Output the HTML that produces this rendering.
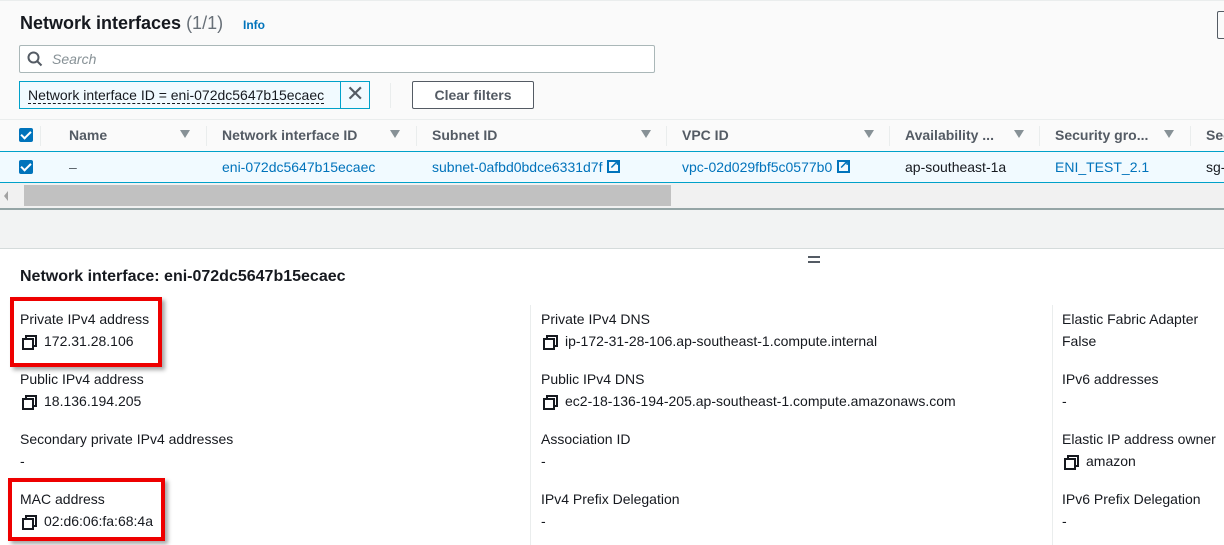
<!DOCTYPE html>
<html><head><meta charset="utf-8"><style>
*{margin:0;padding:0;box-sizing:border-box}
body{width:1224px;height:545px;overflow:hidden;background:#fff;font-family:"Liberation Sans",sans-serif;font-size:14px;color:#16191f;position:relative}
.a{position:absolute;white-space:nowrap}
.lnk{color:#0073bb}
.th{font-weight:bold;color:#545b64;top:127px}
.tri{position:absolute;top:130px;width:0;height:0;border-left:5px solid transparent;border-right:5px solid transparent;border-top:8px solid #879196}
.sep{position:absolute;top:126px;width:1px;height:20px;background:#eaeded}
.cb{position:absolute;width:14px;height:14px;background:#0073bb;border-radius:2px}
.cb:after{content:"";position:absolute;left:4px;top:1px;width:4px;height:8px;border:solid #fff;border-width:0 2px 2px 0;transform:rotate(45deg)}
.lbl{color:#16191f}
.cp{display:inline-block;width:12px;height:12px;position:relative;margin-right:10px;vertical-align:-1px}
.cp:before{content:"";position:absolute;left:3px;top:0;width:8px;height:8px;border:2px solid #16191f}
.cp:after{content:"";position:absolute;left:0;top:3px;width:8px;height:8px;border:2px solid #16191f;background:#fff}
.ext{display:inline-block;width:13px;height:13px;border:2px solid #0073bb;margin-left:5px;vertical-align:-1px;position:relative}
.ext:after{content:"↗";position:absolute;left:0;top:-5px;font-size:12px;font-weight:bold;color:#0073bb}
.red{position:absolute;border:4px solid #ee0000;box-shadow:3px 3px 4px rgba(0,0,0,.35)}
</style></head><body>
<div class="a" style="left:0;top:0;width:1224px;height:208px;background:#fafafa;border-top:1px solid #eaeded"></div>
<div class="a" style="left:20px;top:13px;font-size:18px;font-weight:bold">Network interfaces <span style="font-weight:normal;color:#687078">(1/1)</span></div>
<div class="a lnk" style="left:243px;top:18px;font-size:12px;font-weight:bold">Info</div>
<div class="a" style="left:1217px;top:11px;width:10px;height:28px;border:1px solid #545b64;border-radius:2px"></div>
<div class="a" style="left:19px;top:45px;width:636px;height:28px;border:1px solid #aab7b8;background:#fff;border-radius:2px"></div>
<svg class="a" style="left:27px;top:51px" width="16" height="16"><circle cx="6.5" cy="6.5" r="5" fill="none" stroke="#545b64" stroke-width="2"/><line x1="10" y1="10" x2="14.5" y2="14.5" stroke="#545b64" stroke-width="2"/></svg>
<div class="a" style="left:52px;top:51px;color:#879196;font-style:italic">Search</div>
<div class="a" style="left:19px;top:81px;width:351px;height:28px;border:1px solid #00a1c9;background:#f1faff"></div>
<div class="a" style="left:340px;top:81px;width:1px;height:28px;background:#00a1c9"></div>
<div class="a" style="left:28px;top:87px;border-bottom:1px dashed #16191f;line-height:16px">Network interface ID = eni-072dc5647b15ecaec</div>
<div class="a" style="left:346px;top:82px;font-size:22px;color:#545b64;line-height:24px">✕</div>
<div class="a" style="left:390px;top:83px;width:1px;height:25px;background:#eaeded"></div>
<div class="a" style="left:412px;top:81px;width:122px;height:28px;border:1px solid #545b64;background:#fff;border-radius:2px;text-align:center;line-height:26px;font-weight:bold;color:#545b64">Clear filters</div>
<div class="a" style="left:0;top:119px;width:1224px;height:1px;background:#eaeded"></div>
<div class="cb" style="left:19px;top:128px"></div>
<div class="sep" style="left:40px"></div>
<div class="a th" style="left:69px">Name</div><div class="tri" style="left:180px"></div><div class="sep" style="left:206px"></div>
<div class="a th" style="left:222px">Network interface ID</div><div class="tri" style="left:390px"></div><div class="sep" style="left:416px"></div>
<div class="a th" style="left:432px">Subnet ID</div><div class="tri" style="left:641px"></div><div class="sep" style="left:666px"></div>
<div class="a th" style="left:682px">VPC ID</div><div class="tri" style="left:864px"></div><div class="sep" style="left:889px"></div>
<div class="a th" style="left:905px">Availability ...</div><div class="tri" style="left:1014px"></div><div class="sep" style="left:1039px"></div>
<div class="a th" style="left:1055px">Security gro...</div><div class="tri" style="left:1164px"></div><div class="sep" style="left:1190px"></div>
<div class="a th" style="left:1206px">Sec</div>
<div class="a" style="left:0;top:151px;width:1224px;height:32px;background:#f1faff;border-top:1px solid #00a1c9;border-bottom:1px solid #00a1c9"></div>
<div class="cb" style="left:19px;top:160px"></div>
<div class="a" style="left:69px;top:159px;color:#545b64">–</div>
<div class="a lnk" style="left:222px;top:159px">eni-072dc5647b15ecaec</div>
<div class="a lnk" style="left:432px;top:159px">subnet-0afbd0bdce6331d7f<span class="ext"></span></div>
<div class="a lnk" style="left:682px;top:159px">vpc-02d029fbf5c0577b0<span class="ext"></span></div>
<div class="a" style="left:905px;top:159px">ap-southeast-1a</div>
<div class="a lnk" style="left:1055px;top:159px">ENI_TEST_2.1</div>
<div class="a" style="left:1206px;top:159px">sg-</div>
<div class="a" style="left:0;top:183px;width:1224px;height:25px;background:#f1f1f1"></div>
<div class="a" style="left:4px;top:191px;width:0;height:0;border-top:5px solid transparent;border-bottom:5px solid transparent;border-right:4px solid #a3a3a3"></div>
<div class="a" style="left:24px;top:185px;width:647px;height:21px;background:#c1c1c1"></div>
<div class="a" style="left:0;top:208px;width:1224px;height:41px;background:#f2f3f3;border-top:2px solid #95a5a6;border-bottom:1px solid #d5dbdb"></div>
<div class="a" style="left:808px;top:256px;width:12px;height:2px;background:#545b64"></div>
<div class="a" style="left:808px;top:261px;width:12px;height:2px;background:#545b64"></div>
<div class="a" style="left:20px;top:268px;font-size:16px;font-weight:bold">Network interface: eni-072dc5647b15ecaec</div>
<div class="a" style="left:530px;top:305px;width:1px;height:240px;background:#eaeded"></div>
<div class="a" style="left:1052px;top:305px;width:1px;height:240px;background:#eaeded"></div>

<div class="a" style="left:20px;top:311px">Private IPv4 address</div>
<div class="a" style="left:22px;top:333px"><span class="cp"></span>172.31.28.106</div>
<div class="a" style="left:20px;top:371px">Public IPv4 address</div>
<div class="a" style="left:22px;top:393px"><span class="cp"></span>18.136.194.205</div>
<div class="a" style="left:20px;top:431px">Secondary private IPv4 addresses</div>
<div class="a" style="left:20px;top:453px">-</div>
<div class="a" style="left:20px;top:491px">MAC address</div>
<div class="a" style="left:22px;top:513px"><span class="cp"></span>02:d6:06:fa:68:4a</div>

<div class="a" style="left:541px;top:311px">Private IPv4 DNS</div>
<div class="a" style="left:543px;top:333px"><span class="cp"></span>ip-172-31-28-106.ap-southeast-1.compute.internal</div>
<div class="a" style="left:541px;top:371px">Public IPv4 DNS</div>
<div class="a" style="left:543px;top:393px"><span class="cp"></span>ec2-18-136-194-205.ap-southeast-1.compute.amazonaws.com</div>
<div class="a" style="left:541px;top:431px">Association ID</div>
<div class="a" style="left:541px;top:453px">-</div>
<div class="a" style="left:541px;top:491px">IPv4 Prefix Delegation</div>
<div class="a" style="left:541px;top:513px">-</div>

<div class="a" style="left:1062px;top:311px">Elastic Fabric Adapter</div>
<div class="a" style="left:1062px;top:333px">False</div>
<div class="a" style="left:1062px;top:371px">IPv6 addresses</div>
<div class="a" style="left:1062px;top:393px">-</div>
<div class="a" style="left:1062px;top:431px">Elastic IP address owner</div>
<div class="a" style="left:1064px;top:453px"><span class="cp"></span>amazon</div>
<div class="a" style="left:1062px;top:491px">IPv6 Prefix Delegation</div>
<div class="a" style="left:1062px;top:513px">-</div>

<div class="red" style="left:10px;top:297px;width:152px;height:70px"></div>
<div class="red" style="left:8px;top:478px;width:157px;height:63px"></div>
</body></html>
